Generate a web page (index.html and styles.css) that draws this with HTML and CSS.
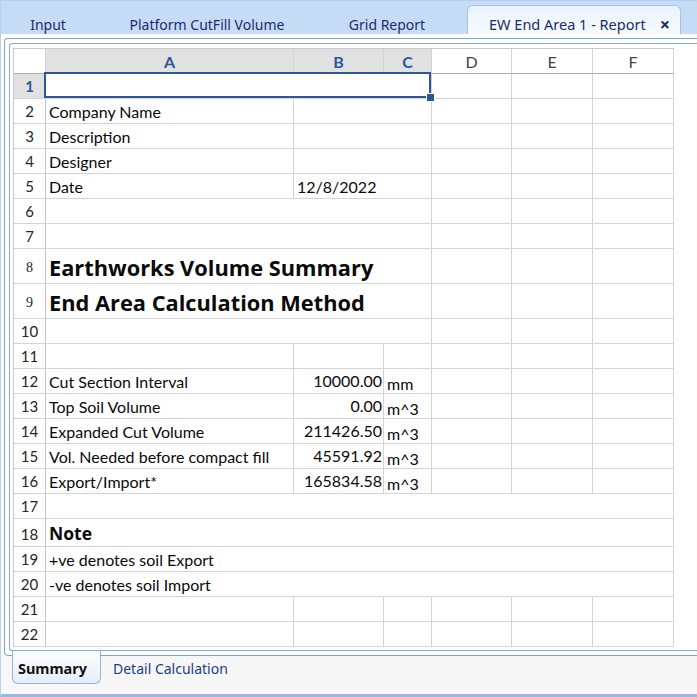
FILE: index.html
```html
<!DOCTYPE html>
<html lang="en">
<head>
    <meta charset="UTF-8">
    <title>EW End Area 1 - Report</title>
    <link rel="stylesheet" href="styles.css">
</head>
<body>
    <!-- Document tabs -->
    <div class="tabbar">
        <div class="tab tab-input">Input</div>
        <div class="tab tab-platform">Platform CutFill Volume</div>
        <div class="tab tab-grid">Grid Report</div>
        <div class="tab tab-active">
            <span>EW End Area 1 - Report</span>
            <span class="close">×</span>
        </div>
    </div>

    <div class="panel">
        <div class="frame-outer">
            <div class="frame-inner">
                <div class="sheet">
                    <!-- Column headers -->
                    <div class="c corner"></div>
                    <div class="c hd hd-sel">A</div>
                    <div class="c hd hd-sel">B</div>
                    <div class="c hd hd-sel">C</div>
                    <div class="c hd">D</div>
                    <div class="c hd">E</div>
                    <div class="c hd">F</div>

                    <div class="c rh rh-sel">1</div>
                    <div class="c span-ac selected"></div>
                    <div class="c"></div><div class="c"></div><div class="c"></div>

                    <div class="c rh">2</div>
                    <div class="c">Company Name</div>
                    <div class="c span-bc"></div>
                    <div class="c"></div><div class="c"></div><div class="c"></div>

                    <div class="c rh">3</div>
                    <div class="c">Description</div>
                    <div class="c span-bc"></div>
                    <div class="c"></div><div class="c"></div><div class="c"></div>

                    <div class="c rh">4</div>
                    <div class="c">Designer</div>
                    <div class="c span-bc"></div>
                    <div class="c"></div><div class="c"></div><div class="c"></div>

                    <div class="c rh">5</div>
                    <div class="c">Date</div>
                    <div class="c span-bc">12/8/2022</div>
                    <div class="c"></div><div class="c"></div><div class="c"></div>

                    <div class="c rh">6</div>
                    <div class="c span-ac"></div>
                    <div class="c"></div><div class="c"></div><div class="c"></div>

                    <div class="c rh">7</div>
                    <div class="c span-ac"></div>
                    <div class="c"></div><div class="c"></div><div class="c"></div>

                    <div class="c rh rh-serif">8</div>
                    <div class="c span-ac title">Earthworks Volume Summary</div>
                    <div class="c"></div><div class="c"></div><div class="c"></div>

                    <div class="c rh rh-serif">9</div>
                    <div class="c span-ac title">End Area Calculation Method</div>
                    <div class="c"></div><div class="c"></div><div class="c"></div>

                    <div class="c rh">10</div>
                    <div class="c span-ac"></div>
                    <div class="c"></div><div class="c"></div><div class="c"></div>

                    <div class="c rh">11</div>
                    <div class="c"></div><div class="c"></div><div class="c"></div>
                    <div class="c"></div><div class="c"></div><div class="c"></div>

                    <div class="c rh">12</div>
                    <div class="c">Cut Section Interval</div>
                    <div class="c num">10000.00</div>
                    <div class="c unit">mm</div>
                    <div class="c"></div><div class="c"></div><div class="c"></div>

                    <div class="c rh">13</div>
                    <div class="c">Top Soil Volume</div>
                    <div class="c num">0.00</div>
                    <div class="c unit">m^3</div>
                    <div class="c"></div><div class="c"></div><div class="c"></div>

                    <div class="c rh">14</div>
                    <div class="c">Expanded Cut Volume</div>
                    <div class="c num">211426.50</div>
                    <div class="c unit">m^3</div>
                    <div class="c"></div><div class="c"></div><div class="c"></div>

                    <div class="c rh">15</div>
                    <div class="c">Vol. Needed before compact fill</div>
                    <div class="c num">45591.92</div>
                    <div class="c unit">m^3</div>
                    <div class="c"></div><div class="c"></div><div class="c"></div>

                    <div class="c rh">16</div>
                    <div class="c">Export/Import*</div>
                    <div class="c num">165834.58</div>
                    <div class="c unit">m^3</div>
                    <div class="c"></div><div class="c"></div><div class="c"></div>

                    <div class="c rh">17</div>
                    <div class="c span-af"></div>

                    <div class="c rh">18</div>
                    <div class="c span-af note">Note</div>

                    <div class="c rh">19</div>
                    <div class="c span-af">+ve denotes soil Export</div>

                    <div class="c rh">20</div>
                    <div class="c span-af">-ve denotes soil Import</div>

                    <div class="c rh">21</div>
                    <div class="c"></div><div class="c"></div><div class="c"></div>
                    <div class="c"></div><div class="c"></div><div class="c"></div>

                    <div class="c rh">22</div>
                    <div class="c"></div><div class="c"></div><div class="c"></div>
                    <div class="c"></div><div class="c"></div><div class="c"></div>
                </div>
            </div>
        </div>
    </div>

    <!-- Sheet tabs -->
    <div class="sheetbar">
        <div class="sheet-tab sheet-active">Summary</div>
        <div class="sheet-tab">Detail Calculation</div>
    </div>
</body>
</html>
```

FILE: styles.css
```css
* {
    margin: 0;
    padding: 0;
    box-sizing: border-box;
}

html, body {
    width: 697px;
    height: 697px;
    overflow: hidden;
}

body {
    display: flex;
    flex-direction: column;
    background: #ffffff;
    border-left: 1px solid #b9d1ef;
    border-bottom: 3px solid #99b8e4;
    font-family: 'Noto Sans', 'Open Sans', sans-serif;
}

/* Document tabs */
.tabbar {
    height: 34px;
    flex: none;
    display: flex;
    align-items: flex-end;
    background: #c6dcf6;
    border-top: 1px solid #b4ceee;
}

.tab {
    height: 29px;
    display: flex;
    align-items: center;
    justify-content: center;
    font-size: 14px;
    color: #1b2b6f;
    padding-top: 9px;
}

.tab-input { width: 94px; }
.tab-platform { width: 224px; }
.tab-grid { width: 136px; }

.tab-active {
    width: 214px;
    height: 30px;
    margin-left: 12px;
    margin-bottom: -1px;
    justify-content: flex-start;
    padding-left: 21px;
    padding-top: 7px;
    font-size: 14.5px;
    background: linear-gradient(180deg, #eaf3fd 0%, #f7fbff 100%);
    border: 1px solid #a6c3e7;
    border-bottom: none;
    border-radius: 6px 6px 0 0;
}

.tab-active .close {
    margin-left: auto;
    margin-right: 10px;
    font-weight: bold;
    font-size: 18px;
    line-height: 18px;
    color: #1b2b6f;
}

/* Frames around the sheet */
.panel {
    flex: none;
    padding: 4px 0 0 3px;
    background: #ffffff;
}

.frame-outer {
    border: 1px solid #7ea8d3;
    border-right: none;
    border-radius: 4px 0 0 4px;
    padding: 4px 0 4px 4px;
}

.frame-inner {
    border: 1px solid #86acd4;
    border-right: none;
    border-radius: 3px 0 0 3px;
    padding: 4px 0 3px 3px;
}

/* Spreadsheet grid */
.sheet {
    display: grid;
    width: 661px;
    grid-template-columns: 32px 248px 90px 48px 80px 81px 81px;
    grid-template-rows: repeat(8, 25px) 35px 35px repeat(8, 25px) 28px repeat(4, 25px);
    border-left: 1px solid #c8c8c8;
    border-top: 1px solid #c8c8c8;
    font-family: 'Lato', 'Noto Sans', sans-serif;
    font-size: 16px;
    color: #0a0a0a;
}

.c {
    border-right: 1px solid #d4d4d4;
    border-bottom: 1px solid #d4d4d4;
    display: flex;
    align-items: flex-end;
    padding: 0 3px 2px 3px;
    line-height: 19px;
    white-space: nowrap;
    overflow: hidden;
}

.corner {
    border-bottom-color: #ababab;
}

.hd {
    justify-content: center;
    align-items: center;
    padding: 0;
    color: #444;
    border-bottom-color: #ababab;
}

.hd-sel {
    background: #e1e1e1;
    color: #2b579a;
    font-weight: bold;
}

.rh {
    justify-content: center;
    padding: 0 0 2px 0;
    font-size: 15px;
    color: #262626;
    border-right-color: #c4c4c4;
}

.rh-sel {
    background: #e1e1e1;
    color: #2b579a;
    font-weight: bold;
}

.rh-serif {
    font-family: 'Liberation Serif', serif;
    font-size: 14px;
    padding-bottom: 6px;
}

.span-bc { grid-column: span 2; }
.span-ac { grid-column: span 3; }
.span-af { grid-column: span 6; }

.num {
    justify-content: flex-end;
    padding-right: 1px;
    padding-bottom: 3px;
}

.unit {
    padding-bottom: 0;
}

.title {
    font-family: 'Open Sans', 'Noto Sans', sans-serif;
    font-size: 21.8px;
    font-weight: bold;
    line-height: 28px;
    padding-bottom: 1px;
}

.note {
    font-family: 'Open Sans', 'Noto Sans', sans-serif;
    font-size: 17.5px;
    font-weight: bold;
    line-height: 24px;
    padding-bottom: 1px;
}

/* Selected range A1:C1 */
.selected {
    position: relative;
    overflow: visible;
    z-index: 2;
}

.selected::before {
    content: '';
    position: absolute;
    left: -2px;
    top: -2px;
    right: 0;
    bottom: 0;
    border: 2px solid #2b579a;
}

.selected::after {
    content: '';
    position: absolute;
    right: -4px;
    bottom: -4px;
    width: 7px;
    height: 7px;
    background: #2b579a;
    border: 1px solid #ffffff;
}

/* Sheet tabs */
.sheetbar {
    flex: 1;
    display: flex;
    align-items: flex-start;
    padding-left: 11px;
    background: #f7f7f7;
}

.sheet-tab {
    height: 24px;
    display: flex;
    align-items: center;
    font-size: 14px;
    color: #1d3b8c;
    margin-left: 12px;
}

.sheet-active {
    position: relative;
    width: 89px;
    height: 33px;
    margin-top: -5px;
    margin-left: 0;
    justify-content: center;
    padding: 1px 8px 0 0;
    font-size: 14.5px;
    font-weight: bold;
    color: #111;
    background: linear-gradient(180deg, #ffffff 0%, #e4eef9 100%);
    border: 1px solid #93b5db;
    border-top: none;
    border-radius: 0 0 6px 6px;
}
```
